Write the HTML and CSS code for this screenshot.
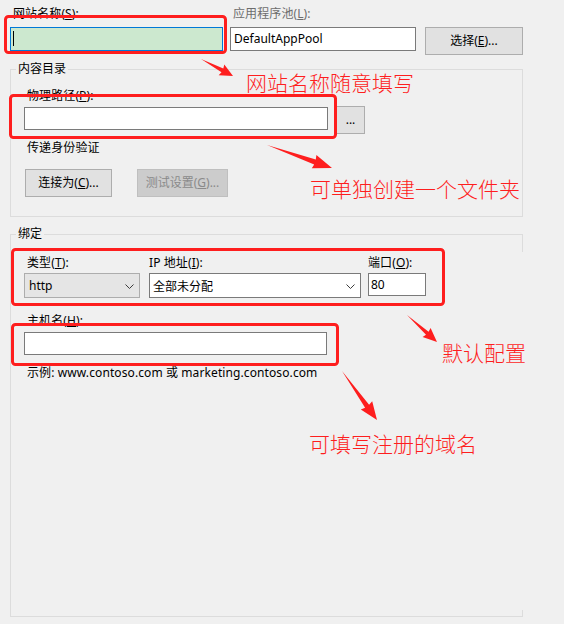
FILE: index.html
```html
<!DOCTYPE html>
<html lang="zh-CN">
<head>
<meta charset="utf-8">
<title>添加网站</title>
<link rel="stylesheet" href="styles.css">
</head>
<body>
<div class="page">
  <div class="top-row">
    <div class="field-site">
      <span class="label">网站名称(<u>S</u>):</span>
      <div class="textbox focused"><span class="caret"></span></div>
    </div>
    <div class="field-pool">
      <span class="label disabled-label">应用程序池(<u>L</u>):</span>
      <div class="textbox">DefaultAppPool</div>
    </div>
    <button class="btn btn-choose">选择(<u>E</u>)...</button>
  </div>

  <div class="group group-content">
    <span class="group-title">内容目录</span>
    <span class="label label-path">物理路径(<u>P</u>):</span>
    <div class="path-row">
      <div class="textbox path-box"></div>
      <button class="btn btn-browse">...</button>
    </div>
    <span class="label label-auth">传递身份验证</span>
    <div class="btn-row">
      <button class="btn btn-connect">连接为(<u>C</u>)...</button>
      <button class="btn btn-test" disabled>测试设置(<u>G</u>)...</button>
    </div>
  </div>

  <div class="group group-binding">
    <span class="group-title">绑定</span>
    <div class="binding-row">
      <div class="col col-type">
        <span class="label">类型(<u>T</u>):</span>
        <div class="combo combo-gray">
          <span>http</span>
          <svg class="chev" width="9" height="5" viewBox="0 0 9 5"><path d="M0.5 0.5 L4.5 4.5 L8.5 0.5" fill="none" stroke="#3c3c3c" stroke-width="1"/></svg>
        </div>
      </div>
      <div class="col col-ip">
        <span class="label flush">IP 地址(<u>I</u>):</span>
        <div class="combo combo-white">
          <span>全部未分配</span>
          <svg class="chev" width="9" height="5" viewBox="0 0 9 5"><path d="M0.5 0.5 L4.5 4.5 L8.5 0.5" fill="none" stroke="#3c3c3c" stroke-width="1"/></svg>
        </div>
      </div>
      <div class="col col-port">
        <span class="label flush">端口(<u>O</u>):</span>
        <div class="textbox port-box">80</div>
      </div>
    </div>
    <span class="label label-host">主机名(<u>H</u>):</span>
    <div class="textbox host-box"></div>
    <span class="label label-example">示例: www.contoso.com 或 marketing.contoso.com</span>
  </div>
</div>

<div class="overlay">
  <svg class="marks" width="564" height="624" viewBox="0 0 564 624">
    <g fill="none" stroke="#fe1e1e" stroke-width="3">
      <rect x="5.5" y="16.5" width="220" height="36" rx="3"/>
      <rect x="10.5" y="95.5" width="325" height="42" rx="3"/>
      <rect x="12.5" y="249.5" width="431" height="55" rx="3"/>
      <rect x="12.5" y="324.5" width="325" height="40" rx="3"/>
    </g>
    <g fill="#fe1e1e">
      <polygon points="201,59 223.3,68.6 224.3,64.6 233,76 218.7,75.2 221.5,72.2"/>
      <polygon points="267,145 315.8,159.6 316.4,155.1 332,168 311.8,168.3 314.2,164.4"/>
      <polygon points="407,315 428.6,331.8 430.6,328.1 437,342 422.6,337.1 426,334.8"/>
      <polygon points="342,371 369.1,404.7 372.2,401.3 377,420 360.8,409.5 365.1,407.7"/>
    </g>
  </svg>
  <div class="note note-1">网站名称随意填写</div>
  <div class="note note-2">可单独创建一个文件夹</div>
  <div class="note note-3">默认配置</div>
  <div class="note note-4">可填写注册的域名</div>
</div>
</body>
</html>
```

FILE: styles.css
```css
html, body {
  margin: 0;
  padding: 0;
}
body {
  width: 564px;
  height: 624px;
  overflow: hidden;
  position: relative;
  background: #f0f0f0;
  color: #000;
  font-family: "Noto Sans", "Noto Sans CJK SC", sans-serif;
  font-size: 12px;
}
u {
  text-decoration: underline;
  text-underline-offset: 1px;
}
.page {
  padding: 6px 0 0 10px;
  width: 513px;
}
.label {
  display: block;
  height: 16px;
  line-height: 16px;
  padding-left: 3px;
  white-space: nowrap;
  letter-spacing: 0.1px;
}
.label.flush {
  padding-left: 0;
}
.disabled-label {
  color: #6d6d6d;
}
.textbox {
  box-sizing: border-box;
  height: 23px;
  border: 1px solid #7a7a7a;
  background: #fff;
  line-height: 21px;
  padding-left: 3px;
  white-space: nowrap;
}
.btn {
  box-sizing: border-box;
  height: 28px;
  padding: 0;
  border: 1px solid #adadad;
  background: #e1e1e1;
  color: #000;
  font-family: inherit;
  font-size: 12px;
  line-height: 26px;
}

/* top row */
.top-row {
  display: flex;
  align-items: flex-start;
}
.top-row .label {
  margin-bottom: 5px;
}
.top-row .textbox {
  height: 24px;
  line-height: 22px;
}
.field-site {
  width: 213px;
}
.focused {
  background: #cce8cf;
  border-color: #0078d7;
  padding-left: 2px;
}
.caret {
  display: inline-block;
  width: 1px;
  height: 15px;
  background: #000;
  vertical-align: middle;
  margin-top: -2px;
}
.field-pool {
  width: 186px;
  margin-left: 7px;
}
.btn-choose {
  width: 98px;
  margin-left: 9px;
  margin-top: 21px;
}

/* groups */
.group {
  box-sizing: border-box;
  width: 513px;
  border: 1px solid #dcdcdc;
  padding: 0 0 0 13px;
}
.group-title {
  display: block;
  width: max-content;
  margin-top: -9px;
  margin-left: -8px;
  padding: 0 2px;
  height: 16px;
  line-height: 16px;
  background: #f0f0f0;
}
.group-content {
  margin-top: 14px;
  padding-bottom: 19px;
}
.label-path {
  margin-top: 11px;
  margin-bottom: 2px;
}
.path-row {
  display: flex;
  align-items: flex-start;
}
.path-box {
  width: 304px;
  flex: none;
  margin-top: 1px;
}
.btn-browse {
  width: 29px;
  flex: none;
  margin-left: 8px;
  line-height: 20px;
}
.label-auth {
  margin-top: 6px;
}
.btn-row {
  display: flex;
  margin-top: 13px;
}
.btn-connect {
  width: 87px;
  margin-left: 1px;
}
.btn-test {
  width: 91px;
  margin-left: 25px;
  background: #cccccc;
  border-color: #bfbfbf;
  color: #8a8a8a;
}

.group-binding {
  margin-top: 17px;
  height: 383px;
  border-right: none;
  position: relative;
}
.group-binding::before,
.group-binding::after {
  content: "";
  position: absolute;
  right: 0;
  width: 1px;
  background: #dcdcdc;
}
.group-binding::before {
  top: -1px;
  height: 18px;
}
.group-binding::after {
  bottom: -1px;
  height: 7px;
}
.binding-row {
  display: flex;
  margin-top: 13px;
}
.binding-row .label {
  margin-bottom: 2px;
}
.col-type {
  width: 116px;
}
.col-ip {
  width: 212px;
  margin-left: 9px;
}
.col-port {
  width: 58px;
  margin-left: 7px;
}
.combo {
  box-sizing: border-box;
  height: 25px;
  display: flex;
  align-items: center;
  justify-content: space-between;
  padding: 0 5px 0 4px;
  white-space: nowrap;
}
.combo-gray {
  background: #e5e5e5;
  border: 1px solid #adadad;
}
.combo-white {
  background: #fff;
  border: 1px solid #7a7a7a;
  padding-left: 3px;
}
.chev {
  display: block;
  margin-top: 1px;
}
.port-box {
  width: 58px;
  padding-left: 2px;
}
.label-host {
  margin-top: 15px;
  margin-bottom: 3px;
}
.host-box {
  width: 303px;
}
.label-example {
  margin-top: 10px;
}

/* annotation overlay */
.overlay {
  position: absolute;
  left: 0;
  top: 0;
  width: 564px;
  height: 624px;
  pointer-events: none;
}
.marks {
  position: absolute;
  left: 0;
  top: 0;
}
.note {
  position: absolute;
  color: #fe1e1e;
  font-family: "Noto Sans CJK SC", sans-serif;
  font-weight: 300;
  font-size: 21px;
  line-height: 24px;
  white-space: nowrap;
}
.note-1 { left: 246px; top: 70px; }
.note-2 { left: 310px; top: 176px; }
.note-3 { left: 442px; top: 340px; }
.note-4 { left: 309px; top: 431px; }
```
